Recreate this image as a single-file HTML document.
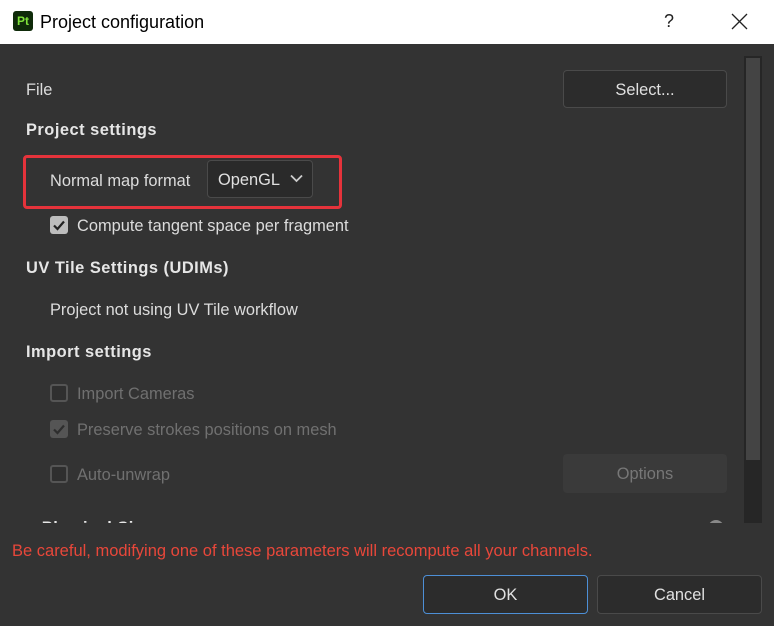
<!DOCTYPE html>
<html><head><meta charset="utf-8"><style>
*{margin:0;padding:0;box-sizing:border-box}
body{width:774px;height:626px;background:#333;font-family:"Liberation Sans",sans-serif;font-size:16.4px;color:#dcdcdc;position:relative;overflow:hidden}
.a{position:absolute;white-space:nowrap}
.title{left:0;top:0;width:774px;height:44px;background:#fff}
.b{font-weight:bold;color:#e6e6e6;letter-spacing:0.5px}
.btn{position:absolute;background:#2c2c2c;border:1px solid #4a4a4a;border-radius:4px;text-align:center;color:#e0e0e0}
.cb{position:absolute;width:18px;height:18px;border-radius:3px}
.dis{color:#707070}
</style></head><body>
<div class="a title">
  <div class="a" style="left:13px;top:11px;width:20px;height:20px;background:#0f2b0a;border-radius:3px;color:#7fe33a;font-weight:bold;font-size:12px;line-height:20px;text-align:center">Pt</div>
  <div class="a" style="left:40px;top:12px;font-size:18px;color:#000">Project configuration</div>
  <div class="a" style="left:664px;top:11px;font-size:18px;color:#222">?</div>
  <svg class="a" style="left:731px;top:13px" width="17" height="17"><path d="M1 1L16 16M16 1L1 16" stroke="#222" stroke-width="1.3"/></svg>
</div>
<div class="a" style="left:26px;top:81px">File</div>
<div class="btn" style="left:563px;top:70px;width:164px;height:38px;line-height:38px">Select...</div>
<div class="a b" style="left:26px;top:121px">Project settings</div>
<div class="a" style="left:23px;top:155px;width:319px;height:54px;border:3px solid #e5333b;border-radius:4px"></div>
<div class="a" style="left:50px;top:172px">Normal map format</div>
<div class="btn" style="left:207px;top:160px;width:106px;height:38px;line-height:38px;text-align:left;padding-left:10px;background:#2a2a2a">OpenGL</div>
<svg class="a" style="left:290px;top:174px" width="13" height="9"><path d="M1 1.5L6.5 7L12 1.5" stroke="#ccc" stroke-width="1.8" fill="none"/></svg>
<div class="cb" style="left:50px;top:216px;background:#bdbdbd"></div>
<svg class="a" style="left:50px;top:216px" width="18" height="18"><path d="M4 9.5L7.5 13L14 5.5" stroke="#222" stroke-width="2.2" fill="none"/></svg>
<div class="a" style="left:77px;top:217px">Compute tangent space per fragment</div>
<div class="a b" style="left:26px;top:259px">UV Tile Settings (UDIMs)</div>
<div class="a" style="left:50px;top:301px">Project not using UV Tile workflow</div>
<div class="a b" style="left:26px;top:343px">Import settings</div>
<div class="cb" style="left:50px;top:384px;border:2px solid #555;background:#2f2f2f"></div>
<div class="a dis" style="left:77px;top:385px">Import Cameras</div>
<div class="cb" style="left:50px;top:420px;background:#555"></div>
<svg class="a" style="left:50px;top:420px" width="18" height="18"><path d="M4 9.5L7.5 13L14 5.5" stroke="#2e2e2e" stroke-width="2.2" fill="none"/></svg>
<div class="a dis" style="left:77px;top:421px">Preserve strokes positions on mesh</div>
<div class="cb" style="left:50px;top:465px;border:2px solid #555;background:#2f2f2f"></div>
<div class="a dis" style="left:77px;top:466px">Auto-unwrap</div>
<div class="a" style="left:563px;top:454px;width:164px;height:39px;background:#3a3a3a;border-radius:4px;line-height:41px;text-align:center;color:#777">Options</div>
<div class="a" style="left:0;top:500px;width:744px;height:23px;overflow:hidden">
  <div class="a b" style="left:28px;top:18px">▸ Physical Size</div>
  <div class="a" style="left:708px;top:20px;width:16px;height:16px;border-radius:50%;background:#888"></div>
</div>
<div class="a" style="left:744px;top:56px;width:18px;height:467px;background:#262626"></div>
<div class="a" style="left:746px;top:58px;width:14px;height:402px;background:#444"></div>
<div class="a" style="left:12px;top:542px;color:#e8473a;font-size:16.5px">Be careful, modifying one of these parameters will recompute all your channels.</div>
<div class="btn" style="left:423px;top:575px;width:165px;height:39px;line-height:39px;border-color:#4d8fd6">OK</div>
<div class="btn" style="left:597px;top:575px;width:165px;height:39px;line-height:39px">Cancel</div>
</body></html>
